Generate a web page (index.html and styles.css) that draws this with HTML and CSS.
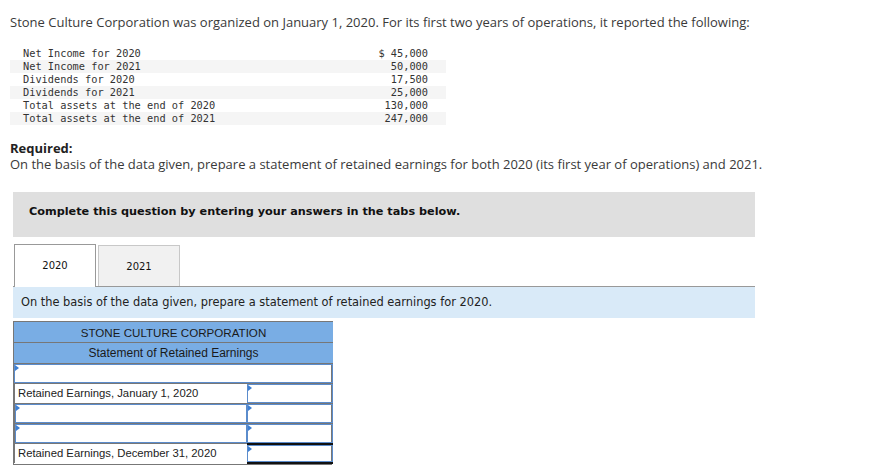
FILE: index.html
```html
<!DOCTYPE html>
<html lang="en">
<head>
  <meta charset="UTF-8">
  <title>Stone Culture Corporation</title>
  <link rel="stylesheet" href="styles.css">
</head>
<body>
  <div class="page">
    <p class="intro">Stone Culture Corporation was organized on January 1, 2020. For its first two years of operations, it reported the following:</p>

    <table class="data">
      <tr><td>Net Income for 2020</td><td class="num">$ 45,000</td></tr>
      <tr><td>Net Income for 2021</td><td class="num">50,000</td></tr>
      <tr><td>Dividends for 2020</td><td class="num">17,500</td></tr>
      <tr><td>Dividends for 2021</td><td class="num">25,000</td></tr>
      <tr><td>Total assets at the end of 2020</td><td class="num">130,000</td></tr>
      <tr><td>Total assets at the end of 2021</td><td class="num">247,000</td></tr>
    </table>

    <div class="required">
      <strong>Required:</strong>
      <p>On the basis of the data given, prepare a statement of retained earnings for both 2020 (its first year of operations) and 2021.</p>
    </div>

    <div class="question">
      <div class="notice">Complete this question by entering your answers in the tabs below.</div>

      <div class="tabs">
        <div class="tab active">2020</div>
        <div class="tab">2021</div>
      </div>
      <div class="instructions">On the basis of the data given, prepare a statement of retained earnings for 2020.</div>

      <div class="statement">
        <div class="head first">STONE CULTURE CORPORATION</div>
        <div class="head">Statement of Retained Earnings</div>
        <div class="cell input wide"></div>
        <div class="cell label">Retained Earnings, January 1, 2020</div>
        <div class="cell input"></div>
        <div class="cell input"></div>
        <div class="cell input"></div>
        <div class="cell input"></div>
        <div class="cell input"></div>
        <div class="cell label">Retained Earnings, December 31, 2020</div>
        <div class="cell input total"></div>
      </div>
    </div>
  </div>
</body>
</html>
```

FILE: styles.css
```css
body {
  margin: 0;
  background: #fff;
  color: #222;
  font-family: "Open Sans", Arial, sans-serif;
}
.page {
  padding: 12px 0 0 10px;
}
.intro {
  margin: 0;
  font-size: 13px;
  line-height: 20px;
  color: #3a3a3a;
}
.data {
  margin-top: 15px;
  width: 436px;
  border-collapse: collapse;
  font-family: "DejaVu Sans Mono", monospace;
  font-size: 10.3px;
  color: #333;
}
.data td {
  height: 13px;
  padding: 0 0 0 13px;
  line-height: 13px;
}
.data td.num {
  text-align: right;
  padding: 0 18px 0 0;
}
.data tr:nth-child(even) {
  background: #f5f5f5;
}
.required {
  margin-top: 15px;
  font-size: 13px;
  line-height: 16px;
  color: #3a3a3a;
}
.required strong {
  display: block;
  color: #222;
}
.required p {
  margin: 0;
}
.question {
  margin: 20px 0 0 3px;
  width: 742px;
}
.notice {
  height: 45px;
  padding-left: 16px;
  box-sizing: border-box;
  background: #dfdfdf;
  font-family: "DejaVu Sans", Verdana, sans-serif;
  font-weight: bold;
  font-size: 11.25px;
  line-height: 39px;
  color: #111;
}
.tabs {
  display: flex;
  align-items: flex-end;
  gap: 2px;
  margin-top: 7px;
  padding-left: 1px;
}
.tab {
  width: 80px;
  height: 40px;
  border: 1px solid #c8c8c8;
  border-bottom: none;
  background: #f1f1f1;
  font-family: "DejaVu Sans", Verdana, sans-serif;
  font-size: 10px;
  line-height: 42px;
  text-align: center;
  color: #111;
}
.tab.active {
  height: 42px;
  margin-bottom: -1px;
  border-color: #999;
  background: #fff;
  position: relative;
}
.instructions {
  height: 31px;
  border-top: 1px solid #999;
  background: #d9eaf8;
  padding-left: 8px;
  font-family: "DejaVu Sans", Verdana, sans-serif;
  font-size: 11.4px;
  line-height: 30px;
  color: #222;
}
.statement {
  margin-top: 3px;
  width: 319px;
  display: grid;
  grid-template-columns: 233px 86px;
  font-family: "Liberation Sans", Arial, sans-serif;
  font-size: 11.3px;
  color: #222;
  border-left: 1px solid #777;
  border-right: 1px solid #777;
  border-bottom: 1px solid #777;
  box-sizing: border-box;
}
.head {
  grid-column: 1 / 3;
  height: 20px;
  border-top: 1px solid #777;
  background: #79ade4;
  text-align: center;
  line-height: 20px;
  font-size: 12px;
  color: #1a1a1a;
}
.head.first {
  font-size: 11.6px;
  line-height: 21px;
}
.cell {
  height: 19px;
  border-top: 1px solid #777;
  position: relative;
}
.cell + .cell:nth-child(even) {
  border-left: 1px solid #777;
}
.label {
  padding-left: 3px;
  line-height: 19px;
}
.input {
  box-shadow: inset 0 0 0 1px #5b8ccc;
}
.input::before {
  content: "";
  position: absolute;
  left: 1px;
  top: 1px;
  border-top: 3px solid transparent;
  border-bottom: 3px solid transparent;
  border-left: 4px solid #3d7fd3;
}
.wide {
  grid-column: 1 / 3;
}
.total {
  border-top: 2px solid #111;
  height: 17px;
  border-bottom: 2px solid #111;
}
```
